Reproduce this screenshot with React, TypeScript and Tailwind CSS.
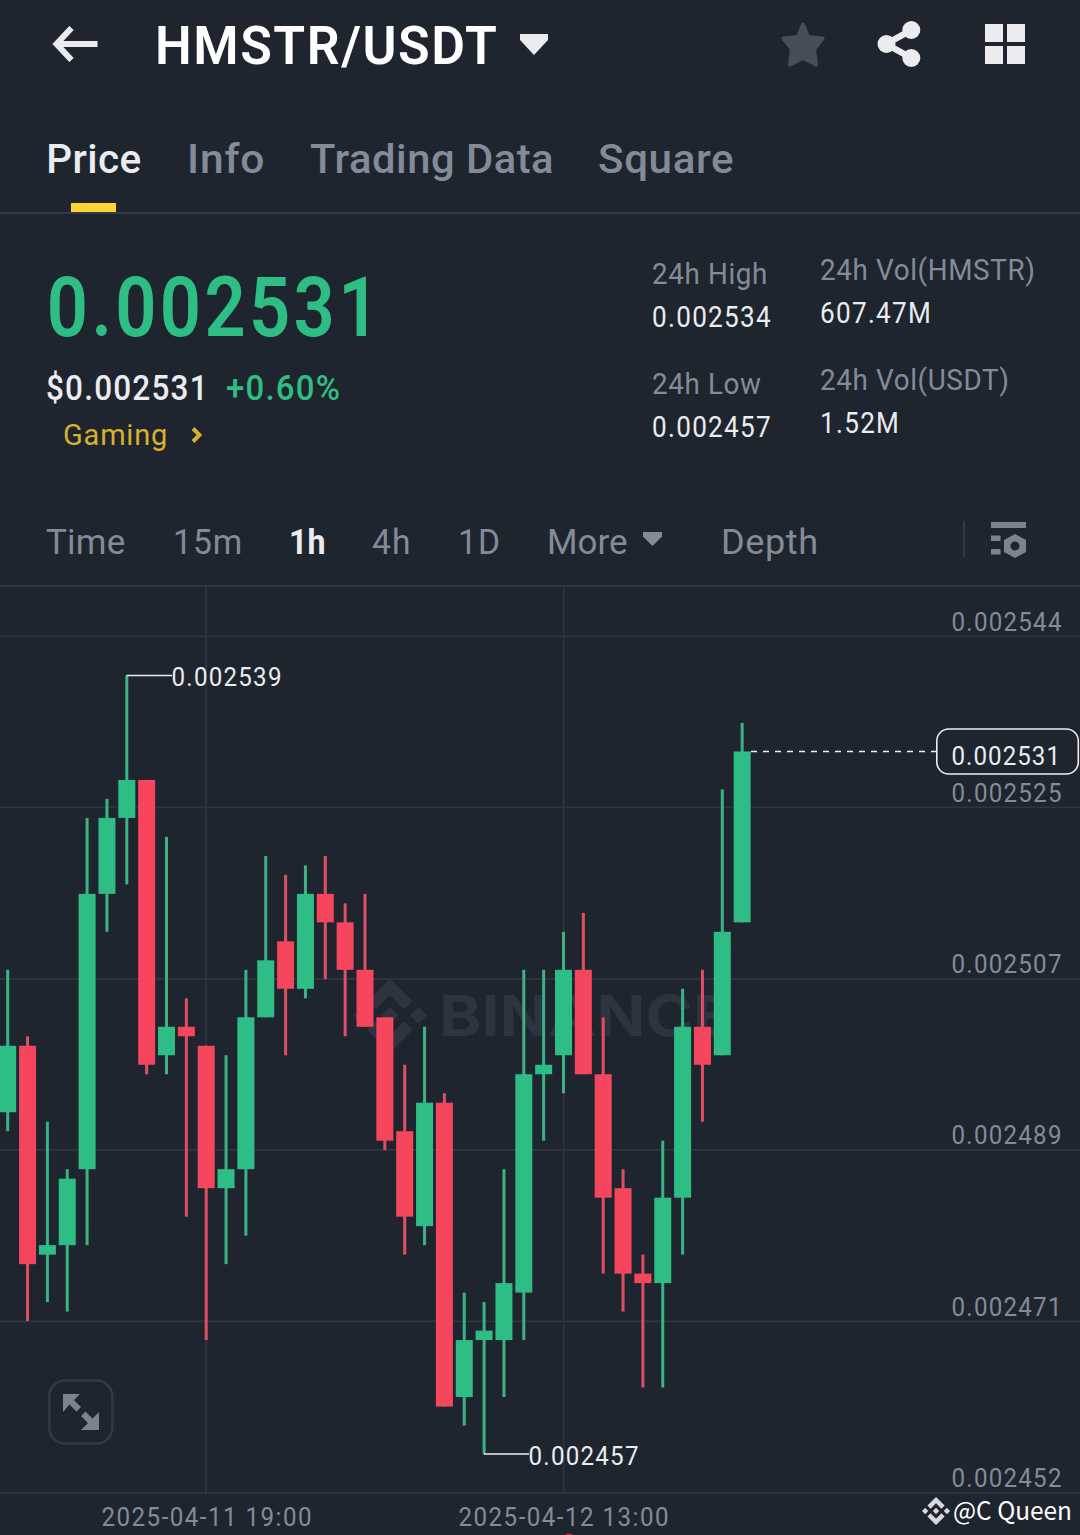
import React from 'react';

// prices are in ticks of 0.000001
const TOP_PRICE = 2539;
const TOP_Y = 90.5;
const TICK = 9.494;
const FIRST_X = 7.7;
const STEP = 19.85;

// [open, high, low, close]
const candles = [
  [2493, 2508, 2491, 2500],
  [2500, 2501, 2471, 2477],
  [2478, 2492, 2473, 2479],
  [2479, 2487, 2472, 2486],
  [2487, 2524, 2479, 2516],
  [2516, 2526, 2512, 2524],
  [2524, 2539, 2517, 2528],
  [2528, 2528, 2497, 2498],
  [2499, 2522, 2497, 2502],
  [2502, 2505, 2482, 2501],
  [2500, 2500, 2469, 2485],
  [2485, 2499, 2477, 2487],
  [2487, 2508, 2480, 2503],
  [2503, 2520, 2503, 2509],
  [2511, 2518, 2499, 2506],
  [2506, 2519, 2505, 2516],
  [2516, 2520, 2507, 2513],
  [2513, 2515, 2501, 2508],
  [2508, 2516, 2502, 2502],
  [2503, 2503, 2489, 2490],
  [2491, 2498, 2478, 2482],
  [2481, 2502, 2479, 2494],
  [2494, 2495, 2462, 2462],
  [2463, 2474, 2460, 2469],
  [2469, 2473, 2457, 2470],
  [2469, 2487, 2463, 2475],
  [2474, 2508, 2469, 2497],
  [2497, 2508, 2490, 2498],
  [2499, 2512, 2495, 2508],
  [2508, 2514, 2497, 2497],
  [2497, 2503, 2476, 2484],
  [2485, 2487, 2472, 2476],
  [2476, 2478, 2464, 2475],
  [2475, 2490, 2464, 2484],
  [2484, 2506, 2478, 2502],
  [2502, 2508, 2492, 2498],
  [2499, 2527, 2499, 2512],
  [2513, 2534, 2513, 2531],
];

const axis = [
  { label: '0.002544', y: 51.5 },
  { label: '0.002525', y: 222.5 },
  { label: '0.002507', y: 394 },
  { label: '0.002489', y: 565 },
  { label: '0.002471', y: 736.5 },
  { label: '0.002452', y: 908 },
];

const priceY = (price: number) => TOP_Y + (TOP_PRICE - price) * TICK;

const BINANCE_PATH =
  'M16.624 13.9202l2.7175 2.7154-7.353 7.353-7.353-7.352 2.7175-2.7164 4.6355 4.6595 4.6356-4.6595zm4.6366-4.6366L24 12l-2.7154 2.7164L18.5682 12l2.6924-2.7164zm-9.272.001l2.7163 2.6914-2.7164 2.7174v-.001L9.2721 12l2.7164-2.7154zm-9.2722-.001L5.4088 12l-2.6914 2.6924L0 12l2.7164-2.7164zM11.9885.0115l7.353 7.329-2.7174 2.7154-4.6356-4.6356-4.6355 4.6595-2.7174-2.7154 7.353-7.353z';

const Header: React.FC = () => {
  return (
    <header className="flex h-[88px] items-center pl-[52px] pr-[55px] text-[#eaecf0]">
      <svg className="h-9 w-[46px] shrink-0" viewBox="0 0 46 36" fill="none">
        <path d="M19.5 2 4.5 18l15 16M4.5 18h41" stroke="currentColor" strokeWidth="6" />
      </svg>
      <h1 className="mt-[4px] ml-[57px] w-[365px] origin-left scale-x-[.96] text-[54px] leading-none font-semibold tracking-[1.6px] whitespace-nowrap text-white">
        HMSTR/USDT
      </h1>
      <svg className="h-[21px] w-7 shrink-0" viewBox="0 0 28 21">
        <path d="M0 0h28v6L14 21 0 6z" fill="currentColor" />
      </svg>
      <div className="ml-auto flex items-center">
        <svg className="h-[46px] w-[46px]" viewBox="0 0 46 46">
          <path
            d="M23 3.500 28 16 42.500 17.500 34 28 36 43.500 23 37 10 43.500 12 28 3.500 17.500 18 16z"
            fill="#474d59"
            stroke="#474d59"
            strokeWidth="4"
            strokeLinejoin="round"
          />
        </svg>
        <svg className="ml-[51px] h-[46px] w-[44px]" viewBox="0 0 44 46" fill="currentColor">
          <path d="M34.500 9 9 23l25.500 14" fill="none" stroke="currentColor" strokeWidth="6.500" />
          <circle cx="9.500" cy="23" r="9" />
          <circle cx="34.300" cy="9" r="9" />
          <circle cx="34.300" cy="37" r="9" />
        </svg>
        <div className="ml-16 grid grid-cols-2 gap-1">
          <i className="h-[18px] w-[18px] bg-[#eaecf0]" />
          <i className="h-[18px] w-[18px] bg-[#eaecf0]" />
          <i className="h-[18px] w-[18px] bg-[#eaecf0]" />
          <i className="h-[18px] w-[18px] bg-[#eaecf0]" />
        </div>
      </div>
    </header>
  );
};

const Tabs: React.FC = () => {
  return (
    <nav className="flex h-[126px] items-start border-b-2 border-[#333a45] pt-[51px] pl-[46px] text-[40.5px] leading-none font-medium whitespace-nowrap text-[#848b98]">
      <div className="flex h-[73px] w-[95px] flex-col items-center justify-between">
        <span className="pl-px tracking-[.4px] text-[#eaecf0]">Price</span>
        <i className="h-[9px] w-[45px] bg-[#fcd535]" />
      </div>
      <span className="ml-[46px] w-[123px] origin-left scale-x-[1.05] tracking-[.8px]">Info</span>
      <span className="w-[288px] origin-left scale-x-[1.03] tracking-[.5px]">Trading Data</span>
      <span className="origin-left scale-x-[1.04] tracking-[.6px]">Square</span>
    </nav>
  );
};

interface IStatProps {
  label: string;
  value: string;
}
const Stat: React.FC<IStatProps> = (props) => {
  return (
    <div className="flex h-[110px] flex-col gap-[14px] text-[29px] leading-none whitespace-nowrap">
      <span className="origin-left scale-x-[.96] tracking-[.022em] text-[#848b98]">
        {props.label}
      </span>
      <span className="origin-left scale-x-[.9] tracking-[.05em] text-[#eaecf0]">
        {props.value}
      </span>
    </div>
  );
};

const Summary: React.FC = () => {
  return (
    <section className="flex h-[286px] pl-[46px]">
      <div className="w-[606px] pt-[52px] leading-none">
        <div className="origin-left scale-x-[.87] pl-px text-[83px] leading-[83px] font-semibold tracking-[.046em] text-[#2ebd85]">
          0.002531
        </div>
        <div className="mt-[22px] flex text-[35px] font-medium">
          <span className="w-[180px] origin-left scale-x-[.9] tracking-[.038em] text-[#eaecf0]">
            $0.002531
          </span>
          <span className="origin-left scale-x-[.94] tracking-[.038em] text-[#2ebd85]">+0.60%</span>
        </div>
        <div className="mt-[15px] flex items-center pl-[17px] text-[29px] text-[#d9b02e]">
          <span className="w-[128px] tracking-[.8px]">Gaming</span>
          <svg className="-mt-px h-4 w-[11px]" viewBox="0 0 11 16" fill="none">
            <path d="m2 1.500 6.500 6.500L2 14.500" stroke="currentColor" strokeWidth="4" />
          </svg>
        </div>
      </div>
      <div className="w-[168px] pt-[46px]">
        <Stat label="24h High" value="0.002534" />
        <Stat label="24h Low" value="0.002457" />
      </div>
      <div className="pt-[42px]">
        <Stat label="24h Vol(HMSTR)" value="607.47M" />
        <Stat label="24h Vol(USDT)" value="1.52M" />
      </div>
    </section>
  );
};

const Intervals: React.FC = () => {
  return (
    <div className="flex h-[85px] items-start pt-[24px] pl-[46px] text-[35px] leading-none whitespace-nowrap text-[#848b98]">
      <div className="flex pt-px">
        <span className="w-[127px] tracking-[.2px]">Time</span>
        <span className="w-[116px] origin-left scale-x-[.96] tracking-[.03em]">15m</span>
        <span className="w-[83px] origin-left scale-x-[.92] font-bold text-[#eaecf0]">1h</span>
        <span className="w-[86px] origin-left scale-x-[.96] tracking-[.03em]">4h</span>
        <span className="w-[89px] origin-left scale-x-[.96] tracking-[.03em]">1D</span>
        <span className="w-[96px]">More</span>
      </div>
      <svg className="mt-2 h-[14px] w-[19px]" viewBox="0 0 19 14">
        <path d="M0 0h19v4.500L9.500 14 0 4.500z" fill="currentColor" />
      </svg>
      <span className="ml-[59px] w-[242px] origin-left scale-x-[1.03] pt-px tracking-[.6px]">Depth</span>
      <i className="-mt-[3px] h-9 w-[2px] bg-[#333a45]" />
      <svg className="-mt-[2px] ml-[26px] h-9 w-[35px]" viewBox="0 0 35 36" fill="#7c8290">
        <path d="M0 0h35v6H0zM0 13.500h9.500V19H0zM0 27h9.500v5.500H0z" />
        <path
          fillRule="evenodd"
          d="M24 12l11 6v12l-11 6-11-6V18zm0 7.500a4.500 4.500 0 1 0 0 9 4.500 4.500 0 0 0 0-9z"
        />
      </svg>
    </div>
  );
};

interface IChartLabelProps {
  x: number;
  y: number;
  width: number;
  text: string;
}
// narrow figures, spaced out to the given width
const ChartLabel: React.FC<IChartLabelProps> = ({ x, y, width, text }) => {
  return (
    <text transform={`translate(${x} ${y}) scale(.91 1)`} textLength={width / 0.91}>
      {text}
    </text>
  );
};

const Chart: React.FC = () => {
  return (
    <svg className="block h-[950px] w-[1080px]" viewBox="0 0 1080 950" fontSize="26.500">
      <g fill="#2e3540">
        <rect x="0" y="-.500" width="1080" height="2.500" />
        {axis.map((row) => (
          <rect key={row.label} x="0" y={row.y - 1} width="1080" height="1.800" />
        ))}
        <rect x="205.300" y="2" width="1.700" height="906" />
        <rect x="562.800" y="2" width="1.700" height="906" />
      </g>

      <g fill="#2e343f">
        <path d={BINANCE_PATH} transform="translate(353 393.500) scale(3.080)" />
        <text
          x="439"
          y="451"
          fontFamily="Inter"
          fontWeight="700"
          fontSize="56"
          textLength="293"
          lengthAdjust="spacingAndGlyphs"
        >
          BINANCE
        </text>
      </g>

      {candles.map(([open, high, low, close], i) => {
        const x = FIRST_X + i * STEP;
        const top = priceY(Math.max(open, close));
        const bottom = priceY(Math.min(open, close));
        const rising = close > open;
        return (
          <g key={i} fill={rising ? '#2ebd85' : '#f6465d'}>
            <rect
              x={x - 1.5}
              y={priceY(high)}
              width="3"
              height={priceY(low) - priceY(high)}
              fill={rising ? '#3bb387' : '#df4f64'}
            />
            <rect x={x - 8.5} y={top} width="17" height={bottom - top} />
          </g>
        );
      })}

      <g stroke="#eaecf0" strokeWidth="1.600" fill="none">
        <path d="M126.500 90.500H172M484 869H529" />
        <path d="M751 166.500H936" strokeDasharray="6 6" />
        <rect x="936.800" y="144" width="141.500" height="45" rx="12" fill="#1f252f" />
      </g>

      <g fill="#eaecf0">
        <ChartLabel x={171.5} y={100.5} width={110} text="0.002539" />
        <ChartLabel x={528.5} y={879.5} width={110} text="0.002457" />
        <ChartLabel x={951.5} y={179.5} width={108.5} text="0.002531" />
      </g>
      <g fill="#848b98">
        {axis.map((row) => (
          <ChartLabel key={row.label} x={951.5} y={row.y - 6} width={110} text={row.label} />
        ))}
        <ChartLabel x={101.5} y={940.5} width={210} text="2025-04-11 19:00" />
        <ChartLabel x={458.5} y={940.5} width={210} text="2025-04-12 13:00" />
      </g>

      {/* full screen toggle */}
      <rect x="49.300" y="795.500" width="63" height="63" rx="16" fill="none" stroke="#333a45" strokeWidth="2.500" />
      <path
        d="M63 809h17l-6 6 7 7-4.500 4.500-7-7L63 827zM99 845H81l7-7-7-7 4.500-4.500 7 7L99 827z"
        fill="#7c8290"
      />

      <path d={BINANCE_PATH} transform="translate(922 912) scale(1.170)" fill="#d5d8dd" />
      <text
        x="953"
        y="935"
        fill="#fff"
        fontFamily="Noto Sans CJK SC"
        fontSize="25"
        textLength="119"
        lengthAdjust="spacingAndGlyphs"
      >
        @C Queen
      </text>
      <ellipse cx="569" cy="951" rx="4" ry="2.500" fill="#c8323c" />
    </svg>
  );
};

export default function App() {
  return (
    <main className="h-[1535px] w-[1080px] overflow-hidden bg-[#1f252f] font-['Roboto',sans-serif]">
      <Header />
      <Tabs />
      <Summary />
      <Intervals />
      <Chart />
    </main>
  );
}
